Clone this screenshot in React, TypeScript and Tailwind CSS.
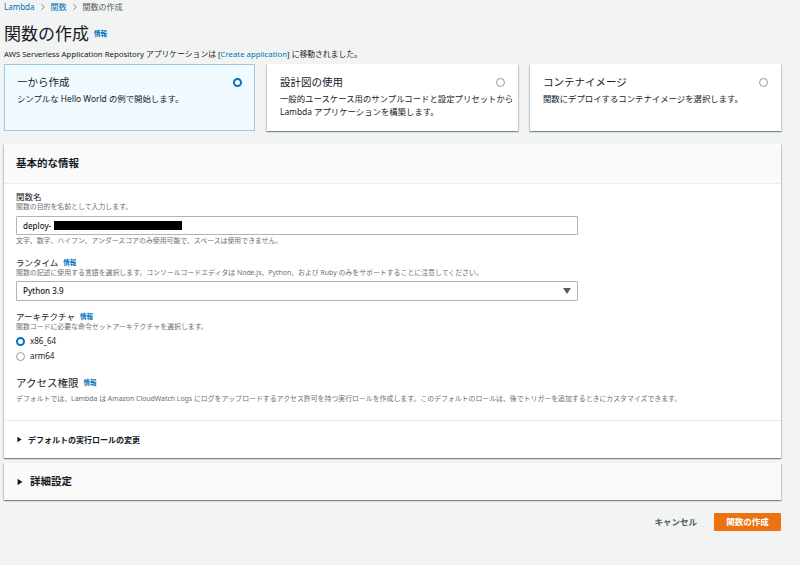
import { ChevronRight } from "lucide-react";

const font = { fontFamily: '"Noto Sans", "Noto Sans CJK JP", sans-serif' };

const Info = () => (
  <span className="ml-[5px] text-[6.5px] font-bold text-[#0073bb] align-middle">情報</span>
);

const Radio = ({ on }: { on?: boolean }) =>
  on ? (
    <span className="inline-block w-[9px] h-[9px] rounded-full border-[2.5px] border-[#0073bb] bg-white shrink-0" />
  ) : (
    <span className="inline-block w-[9px] h-[9px] rounded-full border border-[#8d9b9c] bg-white shrink-0" />
  );

const Tile = ({ title, desc, on }: { title: string; desc: React.ReactNode; on?: boolean }) => (
  <div
    className={
      on
        ? "h-[67px] bg-[#f1faff] border border-[#9cc8e3] px-[12px] pt-[10px]"
        : "h-[67px] bg-white shadow-[0_1px_1px_0_rgba(0,28,36,0.3),1px_1px_1px_0_rgba(0,28,36,0.15),-1px_1px_1px_0_rgba(0,28,36,0.15)] px-[13px] pt-[11px]"
    }
  >
    <div className="flex items-center justify-between">
      <span className="text-[10.5px] leading-[14px]">{title}</span>
      <Radio on={on} />
    </div>
    <div className="mt-[3px] text-[8.4px] leading-[13px] whitespace-nowrap">{desc}</div>
  </div>
);

const panelShadow =
  "shadow-[0_1px_1px_0_rgba(0,28,36,0.3),1px_1px_1px_0_rgba(0,28,36,0.15),-1px_1px_1px_0_rgba(0,28,36,0.15)]";

const Caret = ({ size }: { size: number }) => (
  <svg width={size} height={size} viewBox="0 0 10 10" className="shrink-0">
    <path d="M2 1 L8 5 L2 9 Z" fill="#16191f" />
  </svg>
);

export default function App() {
  return (
    <div className="min-h-[565px] bg-[#f2f3f3] text-[#16191f]" style={font}>
      <div className="w-[777px] ml-[4px] pt-[1px]">
        <div className="flex items-center text-[8px] leading-[11px] text-[#545b64]">
          <span className="text-[#0073bb]">Lambda</span>
          <ChevronRight className="mx-[3px] w-[10px] h-[10px] text-[#687078]" strokeWidth={2} />
          <span className="text-[#0073bb]">関数</span>
          <ChevronRight className="mx-[3px] w-[10px] h-[10px] text-[#687078]" strokeWidth={2} />
          <span>関数の作成</span>
        </div>
        <div className="mt-[10px] flex items-center">
          <h1 className="text-[17px] leading-[24px] font-normal">関数の作成</h1>
          <Info />
        </div>
        <div className="mt-[3px] text-[7.8px] leading-[11px] text-[#16191f]">
          AWS Serverless Application Repository アプリケーションは [<span className="text-[#0073bb]">Create application</span>] に移動されました。
        </div>
        <div className="mt-[4px] grid grid-cols-3 gap-[12px]">
          <Tile on title="一から作成" desc="シンプルな Hello World の例で開始します。" />
          <Tile
            title="設計図の使用"
            desc={
              <>
                一般的ユースケース用のサンプルコードと設定プリセットから
                <br />
                Lambda アプリケーションを構築します。
              </>
            }
          />
          <Tile title="コンテナイメージ" desc="関数にデプロイするコンテナイメージを選択します。" />
        </div>

        <div className={"mt-[13px] bg-white " + panelShadow}>
          <div className="h-[40px] bg-[#fafafa] border-b border-[#eaeded] px-[12px] flex items-center">
            <span className="text-[10.5px] font-bold">基本的な情報</span>
          </div>
          <div className="px-[12px] pt-[7px] pb-[16px]">
            <div className="text-[8.5px] leading-[11px]">関数名</div>
            <div className="text-[6.9px] leading-[10px] text-[#687078]">関数の目的を名前として入力します。</div>
            <div className="mt-[4px] w-[562px] h-[19px] border border-[#aab7b8] rounded-[1px] flex items-center px-[6px]">
              <span className="text-[8px] font-medium">deploy-</span>
              <span className="ml-[3px] w-[128px] h-[9px] bg-black" />
            </div>
            <div className="mt-[1px] text-[6.9px] leading-[10px] text-[#687078]">
              文字、数字、ハイフン、アンダースコアのみ使用可能で、スペースは使用できません。
            </div>
            <div className="mt-[12px] flex items-center text-[8.5px] leading-[10px]">
              ランタイム<Info />
            </div>
            <div className="text-[6.9px] leading-[10px] text-[#687078]">
              関数の記述に使用する言語を選択します。コンソールコードエディタは Node.js、Python、および Ruby のみをサポートすることに注意してください。
            </div>
            <div className="mt-[3px] w-[562px] h-[20px] border border-[#aab7b8] rounded-[1px] flex items-center justify-between px-[6px]">
              <span className="text-[8px] font-medium">Python 3.9</span>
              <svg width="8" height="6" viewBox="0 0 8 6">
                <path d="M0 0 L8 0 L4 6 Z" fill="#545b64" />
              </svg>
            </div>
            <div className="mt-[11px] flex items-center text-[8.5px] leading-[10px]">
              アーキテクチャ<Info />
            </div>
            <div className="text-[6.9px] leading-[10px] text-[#687078]">関数コードに必要な命令セットアーキテクチャを選択します。</div>
            <div className="mt-[3px] h-[12px] flex items-center gap-[5px] text-[8px]">
              <Radio on />
              <span>x86_64</span>
            </div>
            <div className="mt-[3px] h-[12px] flex items-center gap-[5px] text-[8px]">
              <Radio />
              <span>arm64</span>
            </div>
            <div className="mt-[13px] flex items-center text-[10.5px] leading-[16px]">
              アクセス権限<Info />
            </div>
            <div className="mt-[3px] text-[6.9px] leading-[10px] text-[#687078]">
              デフォルトでは、Lambda は Amazon CloudWatch Logs にログをアップロードするアクセス許可を持つ実行ロールを作成します。このデフォルトのロールは、後でトリガーを追加するときにカスタマイズできます。
            </div>
          </div>
          <div className="h-[38px] border-t border-[#eaeded] px-[12px] flex items-center gap-[5px]">
            <Caret size={7} />
            <span className="text-[8px] font-bold">デフォルトの実行ロールの変更</span>
          </div>
        </div>

        <div className={"mt-[5px] h-[37px] bg-[#fafafa] px-[12px] flex items-center gap-[6px] " + panelShadow}>
          <Caret size={8} />
          <span className="text-[10.5px] font-bold">詳細設定</span>
        </div>

        <div className="mt-[13px] flex justify-end items-center">
          <span className="text-[8.5px] font-bold text-[#545b64]">キャンセル</span>
          <button className="ml-[17px] w-[67px] h-[18px] bg-[#ec7211] border border-[#ec7211] rounded-[1px] text-white text-[8.5px] font-bold">
            関数の作成
          </button>
        </div>
      </div>
    </div>
  );
}
